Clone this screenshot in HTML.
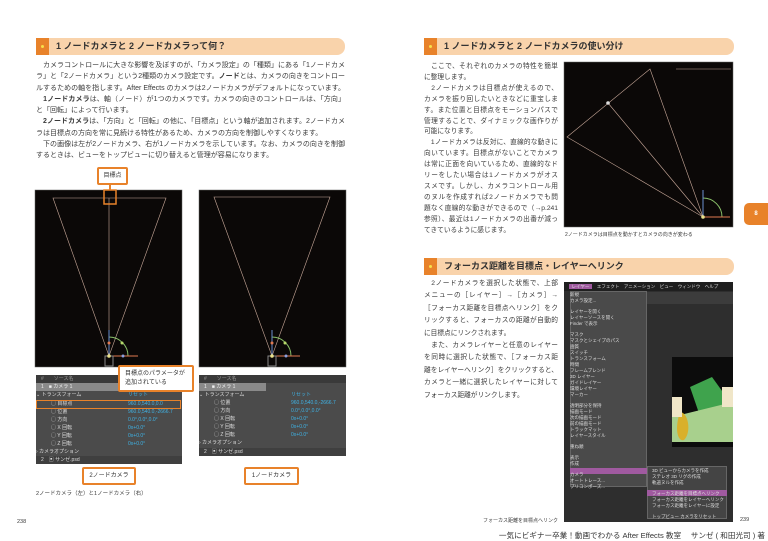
<!DOCTYPE html>
<html><head><meta charset="utf-8"><style>
*{margin:0;padding:0;box-sizing:border-box}
body{width:768px;height:541px;background:#fff;position:relative;overflow:hidden;font-family:"Liberation Sans","Noto Sans CJK JP",sans-serif;color:#3a3a3a}
.a{position:absolute}
.h{position:absolute;height:17px;background:#f9d3ab;border-radius:0 8px 8px 0;font-weight:bold;font-size:9px;color:#333;line-height:17px;padding-left:20px}
.h:before{content:"";position:absolute;left:0;top:0;width:13px;height:17px;background:#e8822a}
.h:after{content:"";position:absolute;left:5px;top:7px;width:3px;height:3px;border-radius:50%;background:#f7e04a}
.t div{white-space:nowrap;overflow:hidden}
.j{text-align:justify;text-align-last:justify}
.tx{font-size:7px}
.tr{font-size:6.7px}
.lp{position:absolute;background:#4b4b4b;font-size:5px;color:#ddd}
.lp div{position:absolute;left:0;right:0;height:8px;line-height:8px}
.v{color:#3fb3e6;position:absolute;left:92px}
.box{position:absolute;border:2px solid #e8822a;border-radius:2px;background:#fff;font-size:6px;color:#333;text-align:center}
.mi{position:absolute;left:6px;font-size:4.5px;color:#ddd;white-space:nowrap}
</style></head><body>

<!-- LEFT PAGE -->
<div class="h" style="left:36px;top:38px;width:309px">1 ノードカメラと 2 ノードカメラって何？</div>
<div class="a t tx" style="left:36px;top:60px;width:309px;line-height:11.3px">
<div class="j">　カメラコントロールに大きな影響を及ぼすのが、「カメラ設定」の「種類」にある「1ノードカメ</div>
<div class="j">ラ」と「2ノードカメラ」という2種類のカメラ設定です。<b>ノード</b>とは、カメラの向きをコントロー</div>
<div class="j">ルするための軸を指します。After Effects のカメラは2ノードカメラがデフォルトになっています。</div>
<div class="j">　<b>1ノードカメラ</b>は、軸（ノード）が1つのカメラです。カメラの向きのコントロールは、「方向」</div>
<div>と「回転」によって行います。</div>
<div class="j">　<b>2ノードカメラ</b>は、「方向」と「回転」の他に、「目標点」という軸が追加されます。2ノードカメ</div>
<div>ラは目標点の方向を常に見続ける特性があるため、カメラの方向を制御しやすくなります。</div>
<div class="j">　下の画像は左が2ノードカメラ、右が1ノードカメラを示しています。なお、カメラの向きを制御</div>
<div>するときは、ビューをトップビューに切り替えると管理が容易になります。</div>
</div>

<svg class="a" style="left:0;top:0" width="768" height="541">
<rect x="35" y="190" width="147" height="177" fill="#0b0807" stroke="#666" stroke-width=".5"/>
<rect x="199" y="190" width="147" height="177" fill="#0b0807" stroke="#666" stroke-width=".5"/>
<g stroke="#c9a99a" stroke-width=".6" fill="none">
<path d="M53 198H166L109 356Z M109 198V356"/>
<path d="M214 197H330L272 356Z"/>
</g>
<rect x="104" y="190" width="12" height="14" fill="none" stroke="#e8822a" stroke-width="1.5"/>
<g stroke-width="1" fill="none">
<path d="M109 337 A19 19 0 0 1 128 356" stroke="#8bc36a"/>
<path d="M109 356V330" stroke="#6b8fd0"/><path d="M109 356H138" stroke="#e07a50"/>
<path d="M272 337 A19 19 0 0 1 291 356" stroke="#8bc36a"/>
<path d="M272 356V330" stroke="#6b8fd0"/><path d="M272 356H300" stroke="#e07a50"/>
<rect x="105" y="356" width="8" height="10" stroke="#888"/>
<rect x="268" y="356" width="8" height="10" stroke="#888"/>
</g>
<circle cx="109" cy="356" r="1.8" fill="#e9e08a"/><circle cx="272" cy="356" r="1.8" fill="#e9e08a"/>
<circle cx="109" cy="343" r="1.5" fill="#e07a50"/><circle cx="272" cy="343" r="1.5" fill="#e07a50"/>
<circle cx="122" cy="343" r="1.5" fill="#b6d86a"/><circle cx="285" cy="343" r="1.5" fill="#b6d86a"/>
<circle cx="123" cy="356" r="1.5" fill="#8ca0e0"/><circle cx="286" cy="356" r="1.5" fill="#8ca0e0"/>
<rect x="564" y="62" width="169" height="165" fill="#0b0807" stroke="#666" stroke-width=".5"/>
<g stroke="#c9a99a" stroke-width=".6" fill="none">
<path d="M567 137L650 69L703 217Z M608 103L703 217 M676 69H731"/>
</g>
<circle cx="608" cy="103" r="1.8" fill="#ddd"/>
<g stroke-width="1" fill="none">
<path d="M703 198 A19 19 0 0 1 722 217" stroke="#8bc36a"/>
<path d="M703 217V190" stroke="#6b8fd0"/><path d="M703 217H730" stroke="#e07a50"/>
</g>
<circle cx="703" cy="217" r="1.8" fill="#e9e08a"/>
<path d="M110 184L110 190" stroke="#e8822a" stroke-width="2"/>
<path d="M148 391L152 399L158 391" fill="#fff" stroke="#e8822a" stroke-width="1.5"/>
</svg>

<div class="box" style="left:97px;top:167px;width:31px;height:18px;line-height:14px">目標点</div>

<div class="lp" style="left:36px;top:375px;width:146px;height:88px">
<div style="top:0;background:#3a3a3a;color:#999">　#　　ソース名</div>
<div style="top:8px;background:#8a8a8a;color:#eee;left:0;right:40px">　1　■ カメラ 1</div>
<div style="top:16px">⌄ トランスフォーム<span class="v">リセット</span></div>
<div style="top:25px">　　　◯ 目標点<span class="v">960.0,540.0,0.0</span></div>
<div style="top:33px">　　　◯ 位置<span class="v">960.0,540.0,-2666.7</span></div>
<div style="top:41px">　　　◯ 方向<span class="v">0.0°,0.0°,0.0°</span></div>
<div style="top:49px">　　　◯ X 回転<span class="v">0x+0.0°</span></div>
<div style="top:57px">　　　◯ Y 回転<span class="v">0x+0.0°</span></div>
<div style="top:65px">　　　◯ Z 回転<span class="v">0x+0.0°</span></div>
<div style="top:73px">› カメラオプション</div>
<div style="top:81px;background:#3f3f3f">　2　▣ サンゼ.psd</div>
</div>
<div class="a" style="left:36px;top:400px;width:145px;height:9px;border:1.5px solid #e8822a"></div>
<div class="box" style="left:118px;top:365px;width:76px;height:27px;text-align:left;padding:3px 5px;line-height:9px">目標点のパラメータが<br>追加されている</div>

<div class="lp" style="left:199px;top:375px;width:147px;height:81px">
<div style="top:0;background:#3a3a3a;color:#999">　#　　ソース名</div>
<div style="top:8px;background:#8a8a8a;color:#eee;right:80px">　1　■ カメラ 1</div>
<div style="top:16px">⌄ トランスフォーム<span class="v">リセット</span></div>
<div style="top:24px">　　　◯ 位置<span class="v">960.0,540.0,-2666.7</span></div>
<div style="top:32px">　　　◯ 方向<span class="v">0.0°,0.0°,0.0°</span></div>
<div style="top:40px">　　　◯ X 回転<span class="v">0x+0.0°</span></div>
<div style="top:48px">　　　◯ Y 回転<span class="v">0x+0.0°</span></div>
<div style="top:56px">　　　◯ Z 回転<span class="v">0x+0.0°</span></div>
<div style="top:64px">› カメラオプション</div>
<div style="top:73px;background:#3f3f3f">　2　▣ サンゼ.psd</div>
</div>

<div class="box" style="left:82px;top:467px;width:54px;height:18px;line-height:14px">2ノードカメラ</div>
<div class="box" style="left:244px;top:467px;width:55px;height:18px;line-height:14px">1ノードカメラ</div>
<div class="a" style="left:36px;top:489px;font-size:5.5px">2ノードカメラ（左）と1ノードカメラ（右）</div>
<div class="a" style="left:17px;top:519px;font-size:5.5px">238</div>

<!-- RIGHT PAGE -->
<div class="h" style="left:424px;top:38px;width:310px">1 ノードカメラと 2 ノードカメラの使い分け</div>
<div class="a t tr" style="left:424px;top:62px;width:134px;line-height:10.9px">
<div class="j">　ここで、それぞれのカメラの特性を簡単</div>
<div>に整理します。</div>
<div class="j">　2ノードカメラは目標点が使えるので、</div>
<div class="j">カメラを振り回したいときなどに重宝しま</div>
<div class="j">す。また位置と目標点をモーションパスで</div>
<div class="j">管理することで、ダイナミックな画作りが</div>
<div>可能になります。</div>
<div class="j">　1ノードカメラは反対に、直線的な動きに</div>
<div class="j">向いています。目標点がないことでカメラ</div>
<div class="j">は常に正面を向いているため、直線的なド</div>
<div class="j">リーをしたい場合は1ノードカメラがオス</div>
<div class="j">スメです。しかし、カメラコントロール用</div>
<div class="j">のヌルを作成すれば2ノードカメラでも問</div>
<div class="j">題なく直線的な動きができるので（→p.241</div>
<div class="j">参照）、最近は1ノードカメラの出番が減っ</div>
<div>てきているように感じます。</div>
</div>
<div class="a" style="left:565px;top:231px;font-size:5px">2ノードカメラは目標点を動かすとカメラの向きが変わる</div>
<div class="a" style="left:744px;top:203px;width:24px;height:22px;background:#e8822a;border-radius:5px 0 0 5px;color:#fff;font-size:6px;font-weight:bold;line-height:22px;text-align:center">8</div>

<div class="h" style="left:424px;top:258px;width:310px">フォーカス距離を目標点・レイヤーへリンク</div>
<div class="a t tr" style="left:424px;top:278px;width:134px;line-height:12.4px">
<div class="j">　2ノードカメラを選択した状態で、上部</div>
<div class="j">メニューの［レイヤー］→［カメラ］→</div>
<div class="j">［フォーカス距離を目標点へリンク］をク</div>
<div class="j">リックすると、フォーカスの距離が自動的</div>
<div>に目標点にリンクされます。</div>
<div class="j">　また、カメラレイヤーと任意のレイヤー</div>
<div class="j">を同時に選択した状態で、［フォーカス距</div>
<div class="j">離をレイヤーへリンク］をクリックすると、</div>
<div class="j">カメラと一緒に選択したレイヤーに対して</div>
<div>フォーカス距離がリンクします。</div>
</div>

<div class="a" style="left:564px;top:282px;width:169px;height:240px;background:#2e2e2e;overflow:hidden">
<div class="a" style="left:0;top:0;width:169px;height:9px;background:#1f1f1f;font-size:4.5px;color:#ddd;line-height:9px;white-space:nowrap">　<span style="background:#a05aa0;padding:0 3px">レイヤー</span>　エフェクト　アニメーション　ビュー　ウィンドウ　ヘルプ</div>
<div class="a" style="left:83px;top:10px;width:86px;height:12px;background:#3c3c3c"></div>
<div class="a" style="left:108px;top:75px;width:61px;height:90px;background:#0c0c0c">
<svg width="61" height="90"><path d="M18 30L40 20L58 45L30 65Z" fill="#3fa34d"/><path d="M0 60L61 45V85H0Z" fill="#a8d08d"/><path d="M8 55c8 0 12 20 4 28c-6 2-10-10-4-28z" fill="#d9b02a"/><path d="M0 40h10v20H0z" fill="#f0e6c8"/><path d="M50 30h11v20H50z" fill="#f0e6c8"/></svg>
</div>
<div class="a" style="left:6px;top:9px;width:77px;height:196px;background:#4a4a4a;border:1px solid #666"></div>
<div class="a" style="left:6px;top:186px;width:77px;height:6px;background:#a05aa0"></div>
<div class="a" style="left:83px;top:184px;width:80px;height:53px;background:#444;border:1px solid #666"></div>
<div class="a" style="left:83px;top:208px;width:80px;height:6px;background:#a05aa0"></div>
<div class="mi" style="top:10px">新規<br>カメラ設定...<br><br>レイヤーを開く<br>レイヤーソースを開く<br>Finder で表示<br><br>マスク<br>マスクとシェイプのパス<br>画質<br>スイッチ<br>トランスフォーム<br>時間<br>フレームブレンド<br>3D レイヤー<br>ガイドレイヤー<br>環境レイヤー<br>マーカー<br><br>透明部分を保持<br>描画モード<br>次の描画モード<br>前の描画モード<br>トラックマット<br>レイヤースタイル<br><br>重ね順<br><br>表示<br>作成<br><br>カメラ<br>オートトレース...<br>プリコンポーズ...</div>
<div class="mi" style="left:88px;top:186px">3D ビューからカメラを作成<br>ステレオ 3D リグの作成<br>軌道ヌルを作成<br><br>フォーカス距離を目標点へリンク<br>フォーカス距離をレイヤーへリンク<br>フォーカス距離をレイヤーに設定<br><br>トップビュー カメラをリセット</div>
</div>
<div class="a" style="left:483px;top:517px;font-size:5px">フォーカス距離を目標点へリンク</div>
<div class="a" style="left:740px;top:517px;font-size:5.5px">239</div>
<div class="a" style="right:3px;top:530px;font-size:7.6px;color:#333;white-space:nowrap">一気にビギナー卒業！動画でわかる After Effects 教室　 サンゼ ( 和田光司 ) 著</div>
</body></html>
